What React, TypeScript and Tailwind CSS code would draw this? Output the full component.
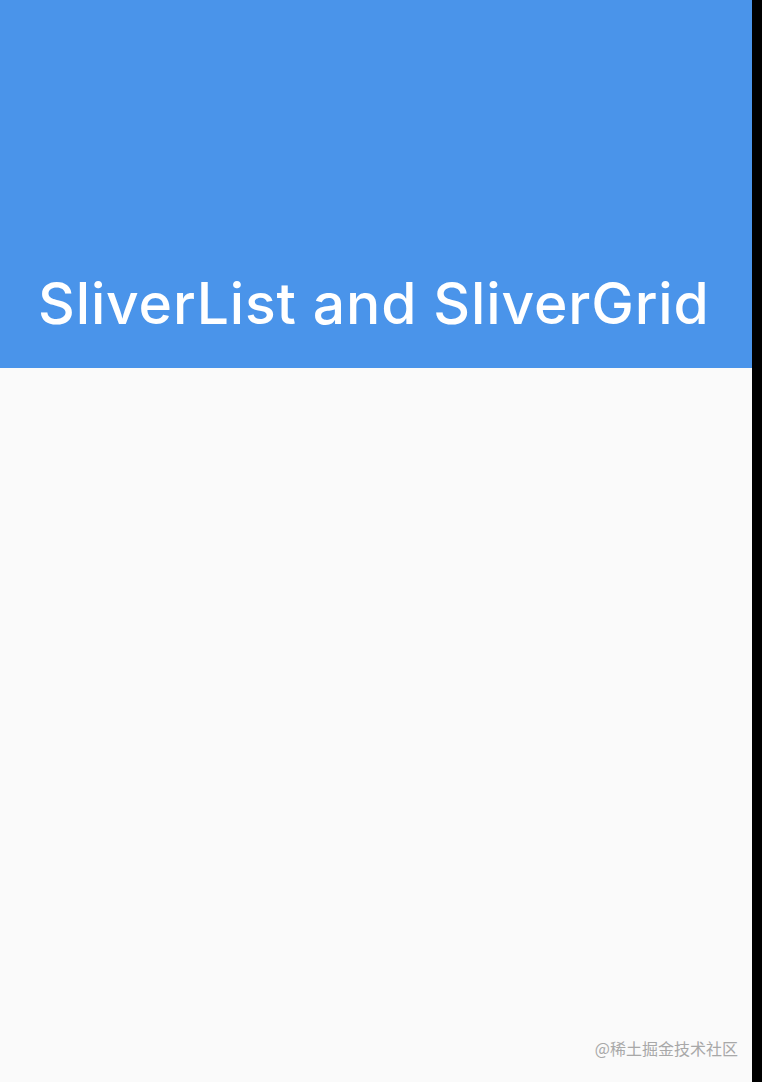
export default function App() {
  return (
    <div className="flex h-[1082px] w-[762px] bg-black" style={{ fontFamily: "Inter, 'Noto Sans', sans-serif" }}>
      <div className="flex w-[752px] flex-col bg-[#fafafa]">
        <div className="flex h-[368px] items-end bg-[#4a94ea] pb-[36px] pl-[38px]">
          <h1 className="text-[57px] font-medium leading-none tracking-[0.85px] text-white">SliverList and SliverGrid</h1>
        </div>
        <div className="flex flex-1 items-end justify-end pb-[26px] pr-[14px]">
          <span className="text-[16px] leading-none text-[#a8a8a8]" style={{ fontFamily: "'Noto Sans CJK SC', sans-serif" }}>@稀土掘金技术社区</span>
        </div>
      </div>
    </div>
  );
}
